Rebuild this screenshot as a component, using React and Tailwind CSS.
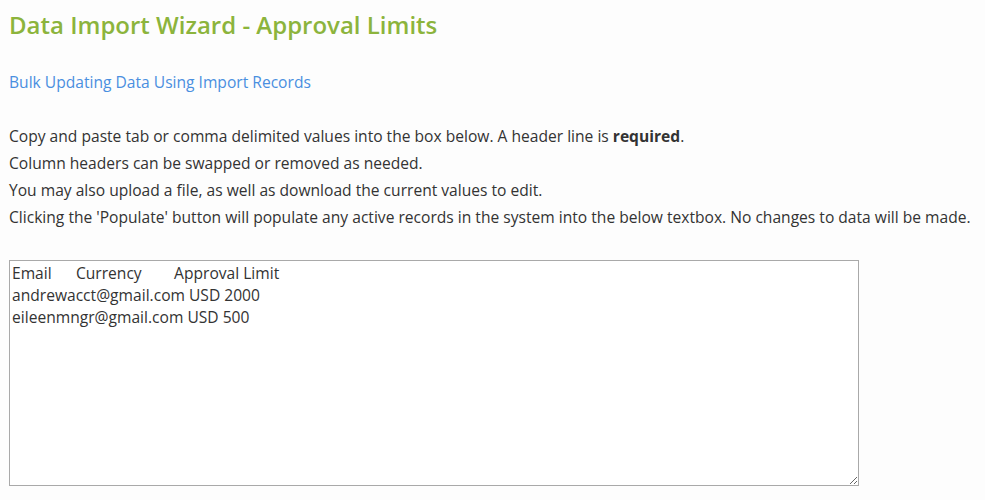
export default function App() {
  const value =
    "Email      Currency        Approval Limit\nandrewacct@gmail.com USD 2000\neileenmngr@gmail.com USD 500";
  return (
    <div className="min-h-[500px] w-full bg-[#fdfdfd] px-[9px] pt-[8px] text-[#333333]" style={{ fontFamily: '"Open Sans", sans-serif' }}>
      <h1 className="text-[24px] font-semibold leading-[33px] text-[#8cb43c]">Data Import Wizard - Approval Limits</h1>
      <div className="mt-[31px] text-[15.6px] leading-[20px] text-[#4a8fe0]">Bulk Updating Data Using Import Records</div>
      <div className="mt-[31px] text-[15.6px] leading-[27px]">
        <div>
          Copy and paste tab or comma delimited values into the box below. A header line is <b className="font-bold">required</b>.
        </div>
        <div>Column headers can be swapped or removed as needed.</div>
        <div>You may also upload a file, as well as download the current values to edit.</div>
        <div>Clicking the 'Populate' button will populate any active records in the system into the below textbox. No changes to data will be made.</div>
      </div>
      <textarea
        readOnly
        defaultValue={value}
        className="mt-[29px] block h-[226px] w-[850px] border border-[#a9a9a9] bg-white px-[2px] py-[1px] text-[15.6px] leading-[22px] text-[#333333] outline-none"
        style={{ fontFamily: '"Open Sans", sans-serif' }}
      />
    </div>
  );
}
